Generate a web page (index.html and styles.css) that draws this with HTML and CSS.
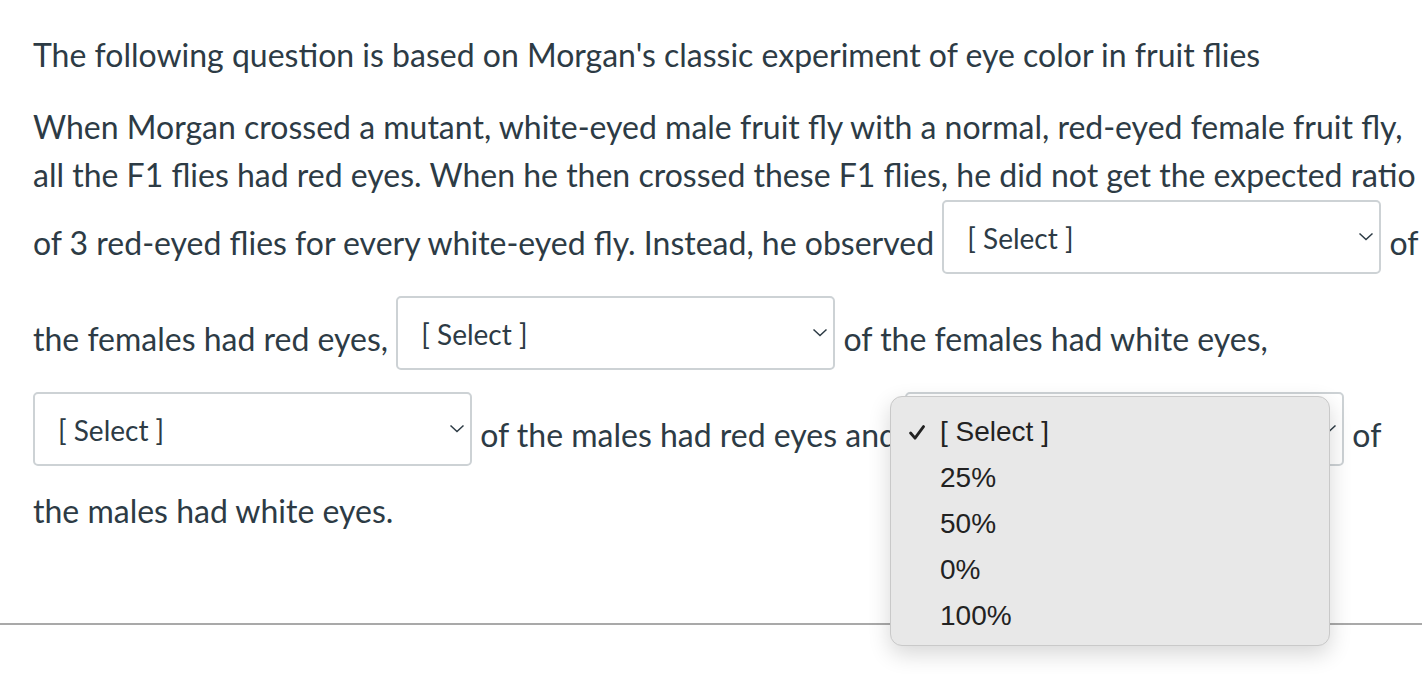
FILE: index.html
```html
<!DOCTYPE html>
<html>
<head>
<meta charset="utf-8">
<link rel="stylesheet" href="styles.css">
</head>
<body>
<div class="question">
  <p class="para">The following question is based on Morgan's classic experiment of eye color in fruit flies</p>
  <p class="para">When Morgan crossed a mutant, white-eyed male fruit fly with a normal, red-eyed female fruit fly, all the F1 flies had red eyes. When he then crossed these F1 flies, he did not get the expected ratio of 3 red-eyed flies for every white-eyed fly. Instead, he observed <span class="sel"><span class="sel-text">[ Select ]</span><svg class="chev" width="16" height="9" viewBox="0 0 16 9"><path d="M1.5 1.5 L8 7.5 L14.5 1.5" fill="none" stroke="#2d3b45" stroke-width="1.5"/></svg></span> of the females had red eyes, <span class="sel"><span class="sel-text">[ Select ]</span><svg class="chev" width="16" height="9" viewBox="0 0 16 9"><path d="M1.5 1.5 L8 7.5 L14.5 1.5" fill="none" stroke="#2d3b45" stroke-width="1.5"/></svg></span> of the females had white eyes, <span class="sel"><span class="sel-text">[ Select ]</span><svg class="chev" width="16" height="9" viewBox="0 0 16 9"><path d="M1.5 1.5 L8 7.5 L14.5 1.5" fill="none" stroke="#2d3b45" stroke-width="1.5"/></svg></span> of the males had red eyes and <span class="sel"><span class="sel-text">[ Select ]</span><svg class="chev" width="16" height="9" viewBox="0 0 16 9"><path d="M1.5 1.5 L8 7.5 L14.5 1.5" fill="none" stroke="#2d3b45" stroke-width="1.5"/></svg></span> of the males had white eyes.</p>
</div>
<hr class="rule">
<div class="popup">
  <div class="opt"><span class="check"><svg width="16" height="15" viewBox="0 0 16 15"><path d="M1.6 8 L6 13.2 L14.5 1.6" fill="none" stroke="#222" stroke-width="2.8" stroke-linecap="round" stroke-linejoin="round"/></svg></span>[ Select ]</div>
  <div class="opt"><span class="check"></span>25%</div>
  <div class="opt"><span class="check"></span>50%</div>
  <div class="opt"><span class="check"></span>0%</div>
  <div class="opt"><span class="check"></span>100%</div>
</div>
</body>
</html>
```
FILE: styles.css
```css
html, body {
  margin: 0;
  padding: 0;
  background: #ffffff;
}
body {
  position: relative;
  width: 1422px;
  height: 674px;
  overflow: hidden;
}
.question {
  padding: 31px 0 0 33px;
  font-family: Lato, "Liberation Sans", sans-serif;
  font-size: 32px;
  line-height: 48px;
  color: #2d3b45;
}
.para {
  margin: 0 0 24px 0;
}
.para:last-child {
  margin-bottom: 0;
}
.sel {
  display: inline-flex;
  align-items: flex-start;
  justify-content: space-between;
  box-sizing: border-box;
  width: 439px;
  height: 74px;
  border: 2px solid #cdd2d5;
  border-radius: 5px;
  padding: 19px 5px 0 23px;
  margin: 1px 0 21px 0;
  vertical-align: 6px;
  background: #fff;
}
.sel-text {
  font-size: 28px;
  line-height: 34px;
  color: #2d3b45;
}
.chev {
  align-self: center;
  margin-top: -20px;
}
.rule {
  margin: 88px 0 0 0;
  border: 0;
  height: 2px;
  background: #a9a9a9;
}
.popup {
  position: absolute;
  left: 890px;
  top: 396px;
  width: 440px;
  height: 250px;
  box-sizing: border-box;
  background: #e8e8e8;
  border: 1px solid #c9c9c9;
  border-radius: 12px;
  box-shadow: 0 8px 22px rgba(0, 0, 0, 0.16);
  padding: 12px 0 8px 0;
  font-family: "Liberation Sans", Arial, sans-serif;
  font-size: 28px;
  color: #222;
}
.opt {
  display: flex;
  align-items: center;
  height: 46px;
  padding-left: 18px;
}
.check {
  display: inline-flex;
  width: 31px;
  align-items: center;
}
```
